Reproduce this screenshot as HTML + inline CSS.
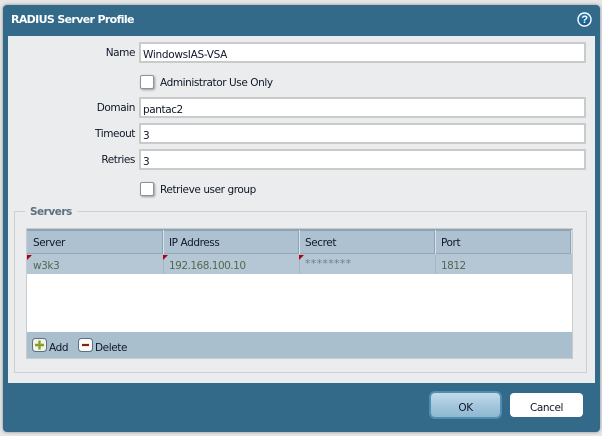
<!DOCTYPE html>
<html><head><meta charset="utf-8">
<style>
html,body{margin:0;padding:0;width:602px;height:436px;overflow:hidden;background:#e6e6e6}
*{box-sizing:border-box}
body{font-family:"DejaVu Sans","Liberation Sans",sans-serif;font-size:10.5px;color:#10182a;position:relative;letter-spacing:-.42px}
div,span{position:absolute;white-space:nowrap}
.t{line-height:14px;height:14px;margin-top:1px}
.inp{left:139px;width:447px;background:#fff;border:2px solid #c9cbcb;}
.lab{right:467px;text-align:right}
.val{left:143px}
.cb{left:140px;width:14px;height:14px;background:#fff;border:1px solid #8a94a0;border-radius:2px;box-shadow:1px 1px 2px #999}
.hd{top:235px}
.sep{top:230px;height:24px;background:#d8e2ea;border-left:1px solid #8fa5b6;width:2px}
.sep2{top:255px;width:1px;height:19px;background:#a3b6c5}
.tri{top:255px;width:0;height:0;border-top:5px solid #b00010;border-right:5px solid transparent}
.rv{top:258px;color:#56684f}
</style></head><body>
<div style="left:3px;top:5px;width:597px;height:427px;background:#336a89;border-radius:4px;box-shadow:0 0 3px #888"></div>
<div class="t" style="left:11px;top:12px;color:#fff;font-weight:bold;font-size:11px;letter-spacing:-.65px">RADIUS Server Profile</div>
<svg style="position:absolute;left:577px;top:12px" width="15" height="15" viewBox="0 0 15 15"><defs><linearGradient id="g" x1="0" y1="0" x2="0" y2="1"><stop offset="0" stop-color="#2c7db5"/><stop offset="1" stop-color="#0f5788"/></linearGradient></defs><circle cx="7.5" cy="7.5" r="6.5" fill="url(#g)" stroke="#fff" stroke-width="1.4"/><text x="7.5" y="11.2" text-anchor="middle" font-family="Liberation Sans" font-weight="bold" font-size="11" fill="#fff">?</text></svg>
<div style="left:8px;top:36px;width:587px;height:347px;background:#ebecee"></div>

<div class="t lab" style="top:45px">Name</div>
<div class="inp" style="top:42px;height:21px"></div>
<div class="t val" style="top:47px;letter-spacing:-.3px">WindowsIAS-VSA</div>
<div class="cb" style="top:75px"></div>
<div class="t" style="left:160px;top:75px">Administrator Use Only</div>

<div class="t lab" style="top:100px">Domain</div>
<div class="inp" style="top:97px;height:21px"></div>
<div class="t val" style="top:102px">pantac2</div>
<div class="t lab" style="top:126px">Timeout</div>
<div class="inp" style="top:123px;height:21px"></div>
<div class="t val" style="top:128px">3</div>
<div class="t lab" style="top:152px">Retries</div>
<div class="inp" style="top:149px;height:21px"></div>
<div class="t val" style="top:154px">3</div>
<div class="cb" style="top:182px"></div>
<div class="t" style="left:160px;top:182px">Retrieve user group</div>

<div style="left:14px;top:211px;width:573px;height:162px;border:1px solid #cdcfd1"></div>
<div class="t" style="left:25px;top:204px;padding:0 5px;background:#ebecee;color:#5c6f7e;font-weight:bold;letter-spacing:-.5px">Servers</div>

<div style="left:26px;top:228px;width:547px;height:131px;background:#fff;border:1px solid #c9cbcd"></div>
<div style="left:27px;top:229px;width:545px;height:25px;background:#adc1d0;border-top:2px solid #8ea3b3;border-bottom:1px solid #93a8b8"></div>
<div style="left:27px;top:254px;width:545px;height:20px;background:#b5c7d4"></div>
<div style="left:27px;top:332px;width:545px;height:26px;background:#a9bfce"></div>
<div class="sep" style="left:162px"></div><div class="sep" style="left:298px"></div><div class="sep" style="left:434px"></div><div class="sep" style="left:570px"></div>
<div class="sep2" style="left:163px"></div><div class="sep2" style="left:299px"></div><div class="sep2" style="left:435px"></div>
<div class="tri" style="left:27px"></div><div class="tri" style="left:163px"></div><div class="tri" style="left:299px"></div>
<div class="t hd" style="left:33px">Server</div>
<div class="t hd" style="left:169px">IP Address</div>
<div class="t hd" style="left:305px">Secret</div>
<div class="t hd" style="left:441px">Port</div>
<div class="t rv" style="left:33px">w3k3</div>
<div class="t rv" style="left:169px;letter-spacing:-.5px">192.168.100.10</div>
<div class="t rv" style="left:305px;top:256px;color:#6a808a;font-size:11px;letter-spacing:.3px">********</div>
<div class="t rv" style="left:441px;letter-spacing:-.5px">1812</div>

<svg style="position:absolute;left:32px;top:338px" width="15" height="14" viewBox="0 0 15 14"><rect x=".5" y=".5" width="14" height="13" rx="3" fill="#f2f4ea" stroke="#5e7080"/><path d="M7.5 2.5v9M3 7h9" stroke="#84a02c" stroke-width="2.4"/></svg>
<div class="t" style="left:49px;top:340px">Add</div>
<svg style="position:absolute;left:78px;top:338px" width="15" height="14" viewBox="0 0 15 14"><rect x=".5" y=".5" width="14" height="13" rx="3" fill="#fafafa" stroke="#5e7080"/><path d="M4 7h7" stroke="#8a2008" stroke-width="2.2"/></svg>
<div class="t" style="left:95px;top:340px">Delete</div>

<div style="left:429px;top:391px;width:73px;height:28px;border:2px solid #4f8db3;border-radius:6px;background:linear-gradient(#c3dbe9,#a2c6dc 55%,#8fb8d2)"></div>
<div class="t" style="left:429px;top:400px;width:73px;text-align:center">OK</div>
<div style="left:510px;top:393px;width:73px;height:24px;background:#fff;border-radius:4px"></div>
<div class="t" style="left:510px;top:400px;width:73px;text-align:center">Cancel</div>
</body></html>
